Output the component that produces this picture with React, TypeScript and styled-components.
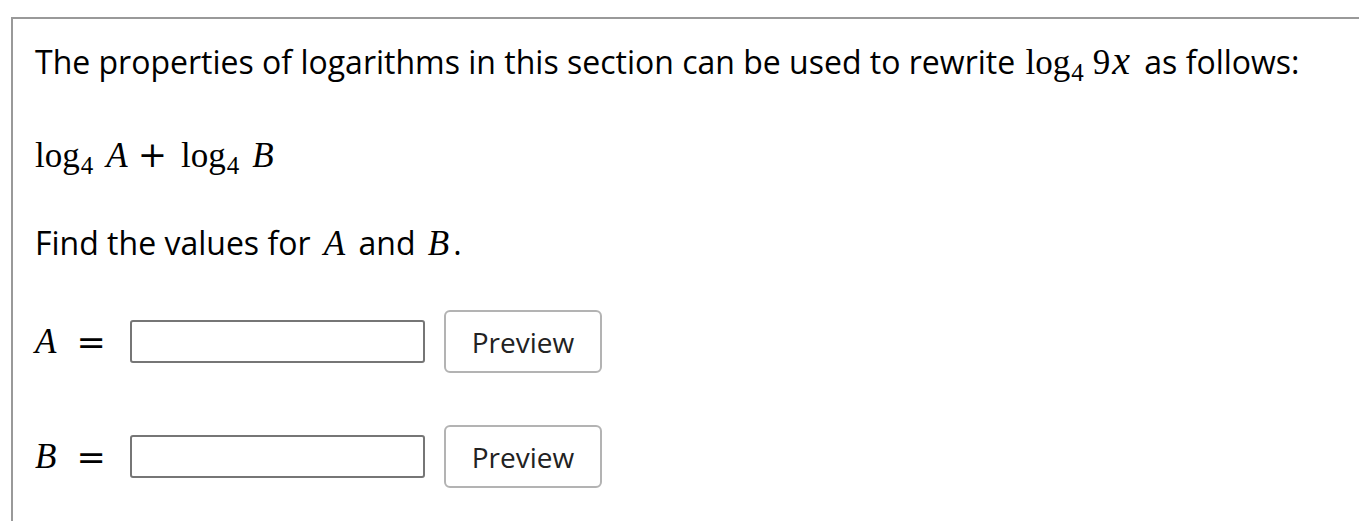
import React from "react";
import styled, { createGlobalStyle } from "styled-components";

const GlobalStyle = createGlobalStyle`
  html, body {
    margin: 0;
    padding: 0;
    background: #ffffff;
    overflow: hidden;
  }
  body {
    font-family: "Open Sans", "Liberation Sans", sans-serif;
    color: #000000;
  }
`;

const Card = styled.div`
  margin: 17px 0 0 11px;
  width: 1400px;
  min-height: 540px;
  border-top: 2px solid #999999;
  border-left: 2px solid #999999;
  padding: 17px 0 0 22px;
  box-sizing: border-box;
`;

const Para = styled.p<{ $gap?: number }>`
  margin: 0 0 ${(p) => p.$gap ?? 40}px 0;
  font-size: 32px;
  line-height: 50px;
  white-space: nowrap;
`;

const Math = styled.span<{ $pad?: number }>`
  font-family: "Liberation Serif", "DejaVu Serif", serif;
  font-size: 35px;
  white-space: nowrap;
  padding: 0 ${(p) => p.$pad ?? 0}px;
`;

const Op = styled.span<{ $right?: number }>`
  font-style: normal;
  margin-right: ${(p) => p.$right ?? 0}px;
`;

const Var = styled.i<{ $right?: number; $wide?: boolean }>`
  font-style: italic;
  margin-right: ${(p) => p.$right ?? 0}px;
  font-size: ${(p) => (p.$wide ? "40px" : "inherit")};
`;

const Sub = styled.sub<{ $right?: number }>`
  font-size: 25px;
  vertical-align: -7px;
  line-height: 0;
  margin: 0 ${(p) => p.$right ?? 13}px 0 1px;
`;

const Symbol = styled.span`
  font-family: "DejaVu Serif", "Liberation Serif", serif;
  font-style: normal;
  font-weight: 300;
`;

const Plus = styled(Symbol)`
  margin: 0 14px 0 10px;
`;

const AnswerRow = styled.div<{ $gap?: number }>`
  display: flex;
  align-items: center;
  margin-bottom: ${(p) => p.$gap ?? 52}px;
`;

const Label = styled.span`
  font-family: "Liberation Serif", "DejaVu Serif", serif;
  font-size: 35px;
  width: 95px;
  display: flex;
  gap: 20px;
`;

const Input = styled.input`
  width: 295px;
  height: 43px;
  box-sizing: border-box;
  border: 2px solid #767676;
  border-radius: 3px;
  padding: 0 6px;
  margin-right: 19px;
`;

const PreviewButton = styled.button`
  width: 158px;
  height: 63px;
  box-sizing: border-box;
  background: #ffffff;
  border: 2px solid #b3b3b3;
  border-radius: 6px;
  font-family: "Open Sans", "Liberation Sans", sans-serif;
  font-size: 28px;
  color: #222222;
  cursor: pointer;
`;

function Log({ arg, gap }: { arg: React.ReactNode; gap?: number }) {
  return (
    <>
      <Op>log</Op>
      <Sub $right={gap}>4</Sub>
      {arg}
    </>
  );
}

export default function App() {
  return (
    <>
      <GlobalStyle />
      <Card>
        <Para $gap={42}>
          The properties of logarithms in this section can be used to rewrite{" "}
          <Math $pad={2}>
            <Log
              gap={9}
              arg={
                <>
                  <Op $right={2}>9</Op>
                  <Var $wide $right={4}>x</Var>
                </>
              }
            />
          </Math>{" "}
          as follows:
        </Para>
        <Para $gap={37}>
          <Math>
            <Log arg={<Var>A</Var>} />
            <Plus>+</Plus>
            <Log arg={<Var>B</Var>} />
          </Math>
        </Para>
        <Para $gap={41}>
          Find the values for <Math $pad={5}><Var>A</Var></Math> and{" "}
          <Math $pad={4}><Var>B</Var></Math>.
        </Para>
        <AnswerRow $gap={52}>
          <Label>
            <Var>A</Var>
            <Symbol>=</Symbol>
          </Label>
          <Input type="text" aria-label="A" />
          <PreviewButton type="button">Preview</PreviewButton>
        </AnswerRow>
        <AnswerRow>
          <Label>
            <Var>B</Var>
            <Symbol>=</Symbol>
          </Label>
          <Input type="text" aria-label="B" />
          <PreviewButton type="button">Preview</PreviewButton>
        </AnswerRow>
      </Card>
    </>
  );
}
